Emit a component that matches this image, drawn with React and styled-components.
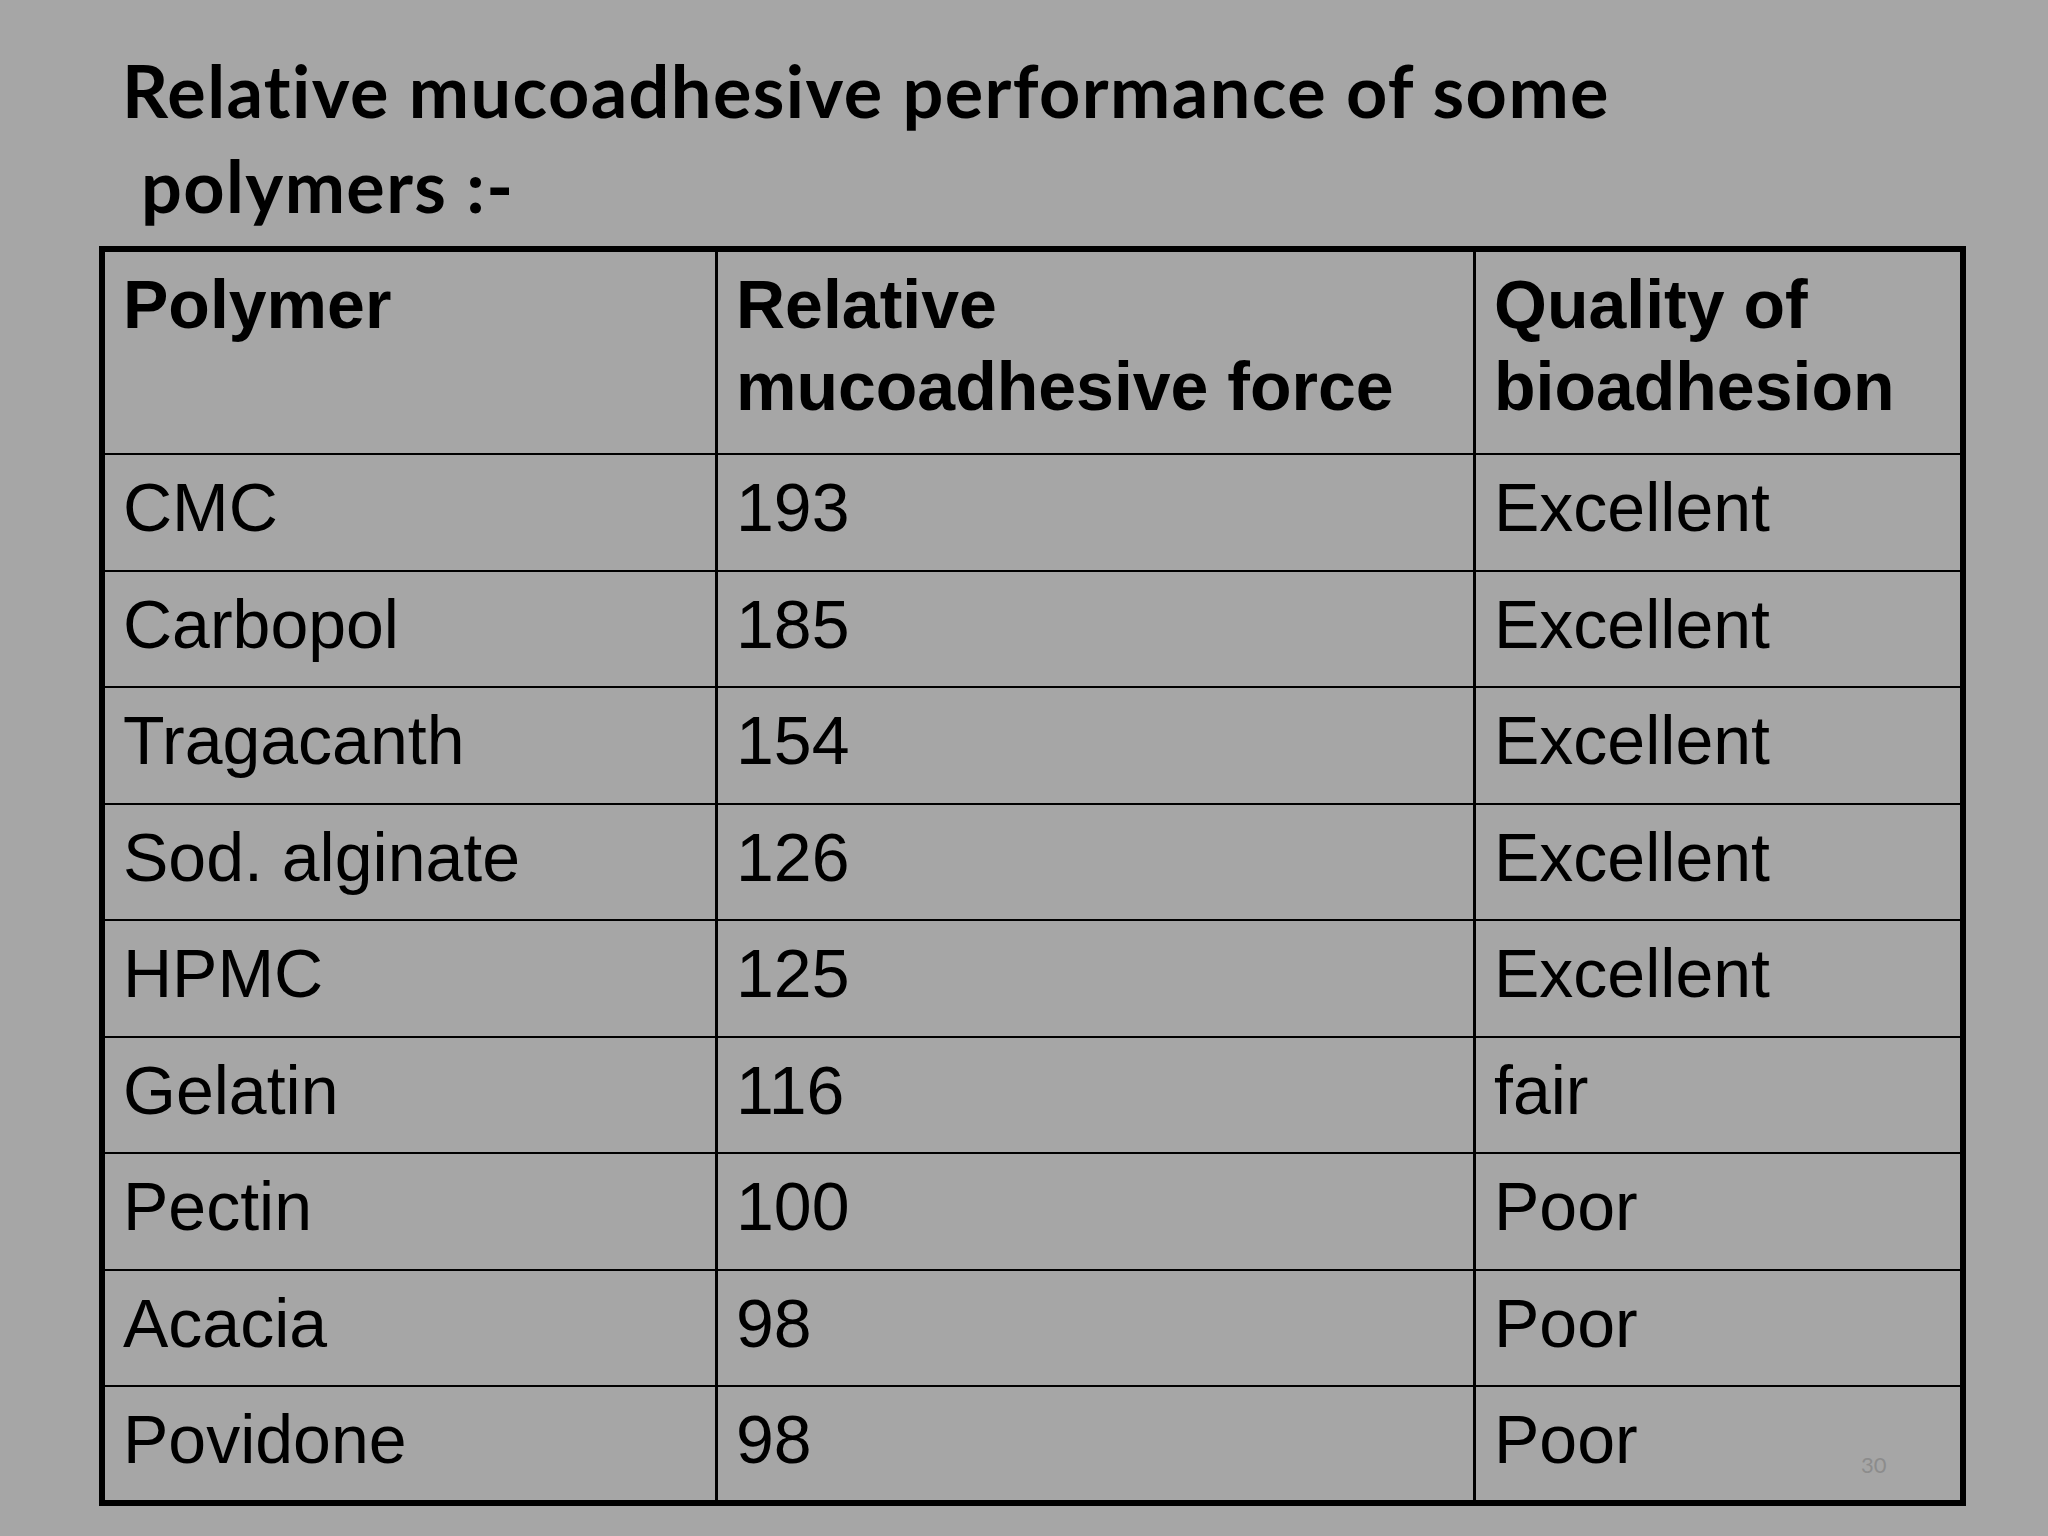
import React from 'react'
import styled, { createGlobalStyle } from 'styled-components'

const GlobalStyle = createGlobalStyle`
  html, body {
    margin: 0;
    padding: 0;
    background: #a6a6a6;
  }
`

const Slide = styled.div`
  position: relative;
  width: 2048px;
  height: 1536px;
  box-sizing: border-box;
  padding: 43px 0 0 99px;
  background: #a6a6a6;
  overflow: hidden;
`

const Title = styled.h1`
  margin: 0 0 13px 23px;
  font-family: Lato, "Open Sans", sans-serif;
  font-weight: 700;
  font-size: 72px;
  letter-spacing: 1.4px;
  font-variant-ligatures: none;
  line-height: 95px;
  color: #000;
  white-space: pre;
`

const Table = styled.table`
  width: 1867px;
  table-layout: fixed;
  border-collapse: separate;
  border-spacing: 0;
  border: 6px solid #000;
  font-family: "Liberation Sans", Arial, sans-serif;
  font-size: 68px;
  line-height: 1.2;
  color: #000;
`

const Row = styled.tr`
  height: ${p => p.$h}px;

  &:last-child td {
    border-bottom: 0;
  }
`

const Cell = styled.td`
  box-sizing: border-box;
  padding: 12px 18px 0;
  vertical-align: top;
  border-right: 3px solid #000;
  border-bottom: 2px solid #000;
  font-weight: ${p => (p.$head ? 700 : 400)};

  &:last-child {
    border-right: 0;
  }
`

const PageNumber = styled.span`
  position: absolute;
  left: 1861px;
  top: 1451px;
  font-family: Lato, "Open Sans", sans-serif;
  font-size: 22px;
  color: #8c8c8c;
`

const rows = [
  ['CMC', '193', 'Excellent'],
  ['Carbopol', '185', 'Excellent'],
  ['Tragacanth', '154', 'Excellent'],
  ['Sod. alginate', '126', 'Excellent'],
  ['HPMC', '125', 'Excellent'],
  ['Gelatin', '116', 'fair'],
  ['Pectin', '100', 'Poor'],
  ['Acacia', '98', 'Poor'],
  ['Povidone', '98', 'Poor']
]

export default function App () {
  return (
    <Slide>
      <GlobalStyle />
      <Title>{'Relative mucoadhesive performance of some\n polymers :-'}</Title>
      <Table>
        <colgroup>
          <col style={{ width: '613px' }} />
          <col style={{ width: '758px' }} />
          <col style={{ width: '484px' }} />
        </colgroup>
        <tbody>
          <Row $h={203}>
            <Cell $head>Polymer</Cell>
            <Cell $head>Relative<br />mucoadhesive force</Cell>
            <Cell $head>Quality of<br />bioadhesion</Cell>
          </Row>
          {rows.map((r, i) => (
            <Row key={r[0]} $h={i === rows.length - 1 ? 113 : 116.5}>
              <Cell>{r[0]}</Cell>
              <Cell>{r[1]}</Cell>
              <Cell>{r[2]}</Cell>
            </Row>
          ))}
        </tbody>
      </Table>
      <PageNumber>30</PageNumber>
    </Slide>
  )
}
